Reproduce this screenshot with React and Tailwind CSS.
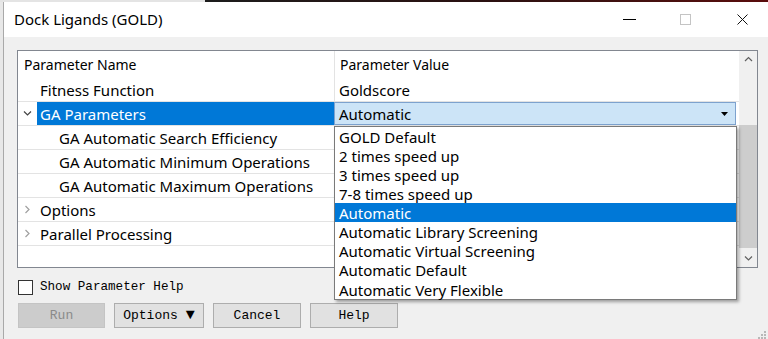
import React from "react";

const rows = [
  { name: "Fitness Function", value: "Goldscore", level: 0 },
  { name: "GA Parameters", value: "Automatic", level: 0, open: true, selected: true },
  { name: "GA Automatic Search Efficiency", level: 1 },
  { name: "GA Automatic Minimum Operations", level: 1 },
  { name: "GA Automatic Maximum Operations", level: 1 },
  { name: "Options", level: 0, closed: true },
  { name: "Parallel Processing", level: 0, closed: true },
];

const choices = [
  "GOLD Default",
  "2 times speed up",
  "3 times speed up",
  "7-8 times speed up",
  "Automatic",
  "Automatic Library Screening",
  "Automatic Virtual Screening",
  "Automatic Default",
  "Automatic Very Flexible",
];

function Chevron({ dir, className }) {
  const d = {
    down: "M1 2.5 L4.5 6 L8 2.5",
    right: "M2.5 1 L6 4.5 L2.5 8",
    up: "M1 6 L4.5 2.5 L8 6",
  }[dir];
  return (
    <svg width="9" height="9" viewBox="0 0 9 9" className={className}>
      <path d={d} fill="none" stroke="currentColor" strokeWidth="1.2" />
    </svg>
  );
}

function TreeRow({ row }) {
  return (
    <div className="flex h-[24px] border-b border-[#e3e3e3]">
      <div className="w-[316px] flex">
        <div className="w-[19px] flex items-center justify-center">
          {row.open && <Chevron dir="down" className="text-[#444]" />}
          {row.closed && <Chevron dir="right" className="text-[#a0a0a0]" />}
        </div>
        <div
          className={
            "flex-1 flex items-center pt-[2px] " +
            (row.level ? "pl-[22px] " : "pl-[3px] ") +
            (row.selected ? "bg-[#0078d7] text-white" : "")
          }
        >
          {row.name}
        </div>
      </div>
      <div className="flex-1 flex border-l border-[#e3e3e3]">
        {row.selected ? (
          <div className="w-[402px] flex items-center justify-between pl-[4px] pr-[7px] bg-[#cce4f7] border border-[#7da2ce] -ml-px">
            <span className="pt-[2px]">{row.value}</span>
            <svg width="7" height="4" viewBox="0 0 7 4">
              <path d="M0 0 H7 L3.5 4 Z" fill="#000" />
            </svg>
          </div>
        ) : (
          <div className="flex items-center pl-[4px] pt-[2px]">{row.value}</div>
        )}
      </div>
    </div>
  );
}

export default function App() {
  return (
    <div className="relative w-[768px] h-[339px] overflow-hidden flex flex-col bg-[#f0f0f0] text-[15px] text-black font-['Noto_Sans',sans-serif]">
      <div className="h-[2px] flex">
        <div className="w-[205px] bg-[#e4e4e4]" />
        <div className="flex-1 bg-gradient-to-r from-[#1c1c1c] via-[#2a1010] to-[#5a0c0c]" />
      </div>
      <div className="flex-1 flex">
        <div className="w-[3px] bg-[#e8e8e8]" />
        <div className="flex-1 flex flex-col border-l border-[#a9a9a9]">
          {/* title bar */}
          <div className="h-[35px] bg-white flex items-center pl-[10px] pr-[20px]">
            <span className="text-[15px]">Dock Ligands (GOLD)</span>
            <div className="flex-1" />
            <div className="w-[13px] h-px bg-black" />
            <div className="ml-[44px] w-[11px] h-[11px] border border-[#c4c4c4]" />
            <svg className="ml-[46px]" width="11" height="11" viewBox="0 0 11 11">
              <path d="M0.5 0.5 L10.5 10.5 M10.5 0.5 L0.5 10.5" stroke="#111" strokeWidth="1" />
            </svg>
          </div>

          {/* tree table */}
          <div className="mt-[13px] ml-[13px] w-[741px] h-[218px] border border-[#828790] bg-white flex">
            <div className="relative flex-1 flex flex-col">
              <div className="h-[27px] flex text-[14px]">
                <div className="w-[316px] flex items-center pl-[6px]">Parameter Name</div>
                <div className="flex-1 flex items-center pl-[5px] border-l border-[#e3e3e3]">
                  Parameter Value
                </div>
              </div>
              {rows.map((r) => (
                <TreeRow key={r.name} row={r} />
              ))}
              <div className="flex-1 flex">
                <div className="w-[316px]" />
                <div className="flex-1 border-l border-[#e3e3e3]" />
              </div>

              {/* open combo list */}
              <div className="absolute left-[316px] top-[75px] w-[403px] h-[174px] bg-white border border-[#7a7a7a] shadow-[2px_2px_3px_rgba(0,0,0,0.35)] flex flex-col z-10">
                {choices.map((c, i) => (
                  <div
                    key={c}
                    className={
                      "h-[19.1px] flex items-center pl-[4px] pt-[1px] " +
                      (i === 4 ? "bg-[#0078d7] text-white" : "")
                    }
                  >
                    {c}
                  </div>
                ))}
              </div>
            </div>

            {/* scrollbar */}
            <div className="w-[18px] flex flex-col bg-[#f0f0f0]">
              <div className="h-[17px] flex items-center justify-center text-[#606060]">
                <Chevron dir="up" />
              </div>
              <div className="flex-1">
                <div className="mt-[57px] h-[123px] bg-[#cdcdcd]" />
              </div>
              <div className="h-[17px] flex items-center justify-center text-[#606060]">
                <Chevron dir="down" />
              </div>
            </div>
          </div>

          {/* help checkbox */}
          <div className="mt-[10px] ml-[14px] flex items-center gap-[7px] font-['Liberation_Mono',monospace] text-[12.6px]">
            <div className="w-[15px] h-[15px] border border-[#333] bg-white" />
            <span>Show Parameter Help</span>
          </div>

          {/* buttons */}
          <div className="mt-[6px] ml-[14px] flex gap-[9px] font-['Liberation_Mono',monospace] text-[13px]">
            <div className="w-[87px] h-[25px] flex items-center justify-center bg-[#cccccc] border border-[#c4c4c4] text-[#8a8a8a]">
              Run
            </div>
            <div className="w-[90px] h-[25px] flex items-center justify-center gap-[8px] bg-[#e1e1e1] border border-[#adadad]">
              <span>Options</span>
              <span className="text-[15px] leading-none">▼</span>
            </div>
            <div className="w-[88px] h-[25px] flex items-center justify-center bg-[#e1e1e1] border border-[#adadad]">
              Cancel
            </div>
            <div className="w-[88px] h-[25px] flex items-center justify-center bg-[#e1e1e1] border border-[#adadad]">
              Help
            </div>
          </div>
        </div>
      </div>

      {/* size grip */}
      <svg className="absolute right-[2px] bottom-0" width="9" height="9" viewBox="0 0 9 9">
        {[
          [7, 1], [7, 4], [4, 4], [7, 7], [4, 7], [1, 7],
        ].map(([x, y]) => (
          <rect key={x + "-" + y} x={x} y={y} width="2" height="2" fill="#b8b8b8" />
        ))}
      </svg>
    </div>
  );
}
